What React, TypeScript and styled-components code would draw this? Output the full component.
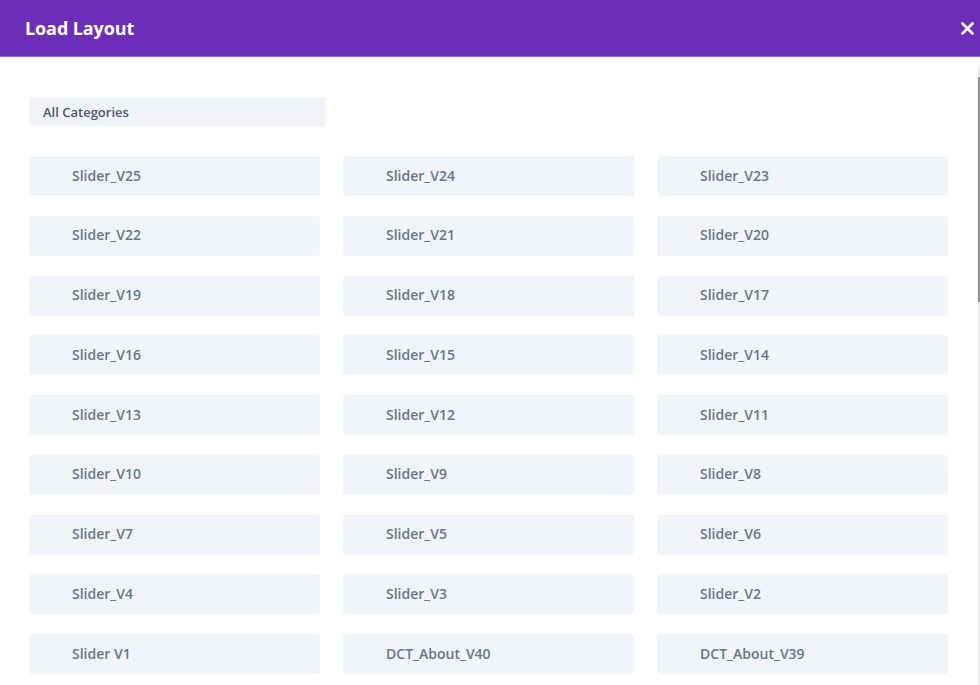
import styled, { createGlobalStyle } from "styled-components";

const GlobalStyle = createGlobalStyle`
  html, body {
    margin: 0;
    padding: 0;
    height: 100%;
    overflow: hidden;
    background: #ffffff;
    font-family: "Open Sans", "Liberation Sans", sans-serif;
  }
  #root {
    height: 100%;
  }
`;

const visible = [
  "Slider_V25", "Slider_V24", "Slider_V23",
  "Slider_V22", "Slider_V21", "Slider_V20",
  "Slider_V19", "Slider_V18", "Slider_V17",
  "Slider_V16", "Slider_V15", "Slider_V14",
  "Slider_V13", "Slider_V12", "Slider_V11",
  "Slider_V10", "Slider_V9", "Slider_V8",
  "Slider_V7", "Slider_V5", "Slider_V6",
  "Slider_V4", "Slider_V3", "Slider_V2",
  "Slider V1", "DCT_About_V40", "DCT_About_V39",
];

// the rest of the list sits below the fold
const layouts = [
  ...visible,
  ...Array.from({ length: 38 }, (_, i) => `DCT_About_V${38 - i}`),
];

function App() {
  return (
    <>
      <GlobalStyle />
      <Modal>
        <Header>
          <Title>Load Layout</Title>
          <CloseButton type="button" aria-label="Close">
            <svg width="13" height="13" viewBox="0 0 13 13">
              <path
                d="M1.5 1.5 L11.5 11.5 M11.5 1.5 L1.5 11.5"
                stroke="#ffffff"
                strokeWidth="2.6"
                strokeLinecap="round"
              />
            </svg>
          </CloseButton>
        </Header>
        <Panel>
          <Scroller>
            <CategorySelect>All Categories</CategorySelect>
            <LayoutGrid>
              {layouts.map((name) => (
                <LayoutCard key={name}>{name}</LayoutCard>
              ))}
            </LayoutGrid>
          </Scroller>
          {/* thin scroll indicator over the right edge */}
          <ScrollTrack>
            <ScrollThumb />
          </ScrollTrack>
        </Panel>
      </Modal>
    </>
  );
}

export default App;

const Modal = styled.div`
  display: flex;
  flex-direction: column;
  height: 100vh;
  background: #ffffff;
`;

const Header = styled.header`
  flex: 0 0 auto;
  display: flex;
  align-items: center;
  justify-content: space-between;
  height: 56px;
  padding: 0 6px 0 25px;
  background: #6c2eb9;
  border-bottom: 1px solid #9468d2;
`;

const Title = styled.h1`
  margin: 0;
  font-size: 18px;
  font-weight: 700;
  color: #ffffff;
  letter-spacing: -0.1px;
`;

const CloseButton = styled.button`
  display: flex;
  align-items: center;
  justify-content: center;
  width: 13px;
  height: 13px;
  padding: 0;
  border: none;
  background: transparent;
  cursor: pointer;
`;

const Panel = styled.div`
  position: relative;
  flex: 1 1 auto;
  min-height: 0;
`;

const Scroller = styled.div`
  height: 100%;
  box-sizing: border-box;
  overflow-y: auto;
  padding: 40px 29px 30px;
  scrollbar-width: none;

  &::-webkit-scrollbar {
    display: none;
  }
`;

const ScrollTrack = styled.div`
  position: absolute;
  top: 9px;
  right: 0;
  bottom: 0;
  width: 2px;
  background: #ededed;
`;

const ScrollThumb = styled.div`
  margin-top: 11px;
  height: 225px;
  width: 100%;
  background: #8f8f8f;
`;

const CategorySelect = styled.div`
  display: flex;
  align-items: center;
  width: 297px;
  height: 29px;
  box-sizing: border-box;
  padding-left: 14px;
  border-radius: 3px;
  background: #f1f5f9;
  font-size: 13px;
  font-weight: 600;
  color: #4c5866;
`;

const LayoutGrid = styled.div`
  display: grid;
  grid-template-columns: repeat(3, 291px);
  column-gap: 23px;
  row-gap: 19.75px;
  margin-top: 30px;
`;

const LayoutCard = styled.div`
  display: flex;
  align-items: center;
  height: 40px;
  box-sizing: border-box;
  padding: 0 0 2px 43px;
  border-radius: 3px;
  background: #f1f5f9;
  font-size: 14px;
  font-weight: 600;
  color: #6b7684;
`;
